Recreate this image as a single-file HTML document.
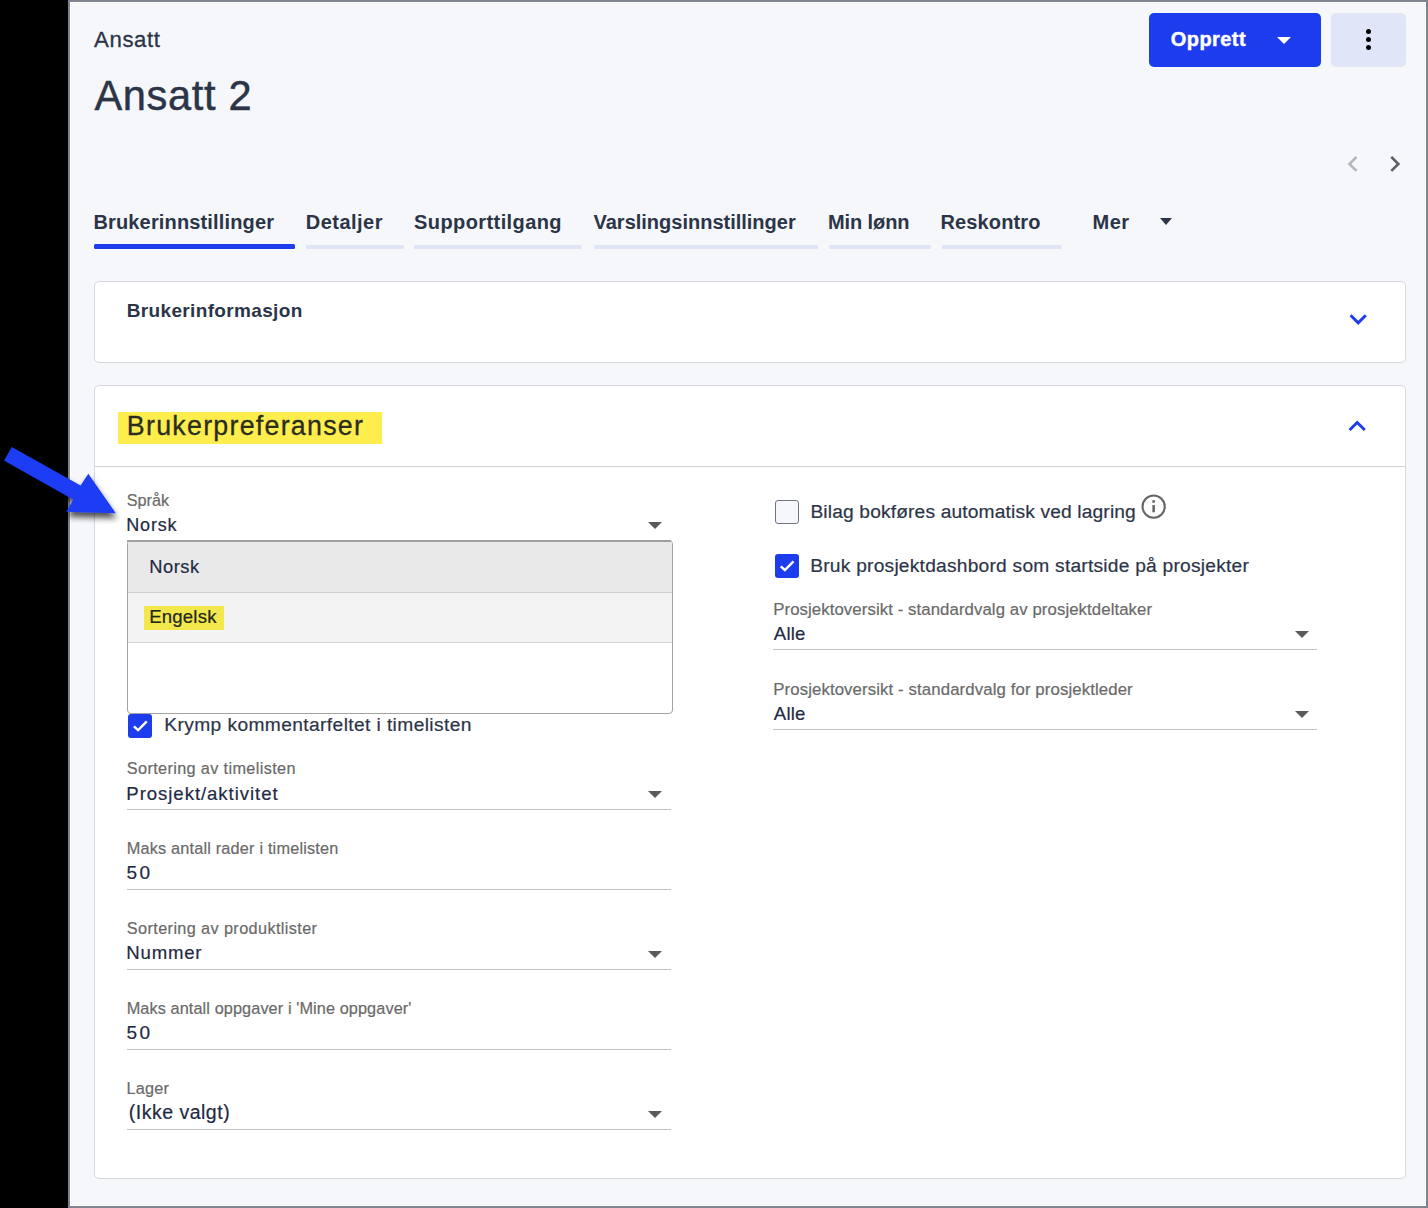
<!DOCTYPE html>
<html><head><meta charset="utf-8">
<style>
html,body{margin:0;padding:0;}
body{width:1428px;height:1208px;background:#000;position:relative;overflow:hidden;font-family:"Liberation Sans",sans-serif;}
.abs{position:absolute;}
.t{position:absolute;white-space:nowrap;line-height:1.117;-webkit-text-stroke:0.2px currentColor;}
#frame{position:absolute;left:68px;top:0;width:1356px;height:1204px;border:2px solid #7f8491;background:#f5f7fb;box-shadow:inset 0 0 0 1px #fff;}
.btn-blue{position:absolute;left:1149px;top:13px;width:172px;height:54px;border-radius:5px;background:#1d3cee;}
.btn-kebab{position:absolute;left:1331px;top:13px;width:75px;height:54px;border-radius:5px;background:#e1e5f8;}
.dot{position:absolute;width:5.2px;height:5.2px;border-radius:50%;background:#000;}
.uline{position:absolute;height:4px;border-radius:1.5px;background:#e0e4f7;top:245px;}
.card{position:absolute;left:94px;width:1310px;background:#fff;border:1px solid #d6d8dd;border-radius:5px;}
.ul{position:absolute;height:1px;background:#c2c2c2;}
.tri{position:absolute;width:0;height:0;border-left:7px solid transparent;border-right:7px solid transparent;border-top:7.4px solid #5a5a5a;}
.cb{position:absolute;width:24px;height:24px;border-radius:3px;background:#1d3cee;box-sizing:border-box;}
.cbu{position:absolute;width:24px;height:24px;border-radius:3px;background:#f5f7fb;border:1px solid #6f7480;box-sizing:border-box;}
</style></head><body>
<div id="frame"></div>

<!-- header buttons -->
<div class="btn-blue"></div>
<div class="tri" style="left:1276.5px;top:37px;border-left-width:7px;border-right-width:7px;border-top-width:7.4px;border-top-color:#fff;"></div>
<div class="btn-kebab"></div>
<div class="dot" style="left:1366.0px;top:29.3px;"></div>
<div class="dot" style="left:1366.0px;top:37.3px;"></div>
<div class="dot" style="left:1366.0px;top:45.3px;"></div>

<!-- pagination chevrons -->
<svg class="abs" style="left:1336.9px;top:147.8px;" width="31.8" height="31.8" viewBox="0 0 24 24"><path d="M15.41 7.41L14 6l-6 6 6 6 1.41-1.41L10.83 12z" fill="#b4b6bb"/></svg>
<svg class="abs" style="left:1379.3px;top:147.8px;" width="31.8" height="31.8" viewBox="0 0 24 24"><path d="M10 6L8.59 7.41 13.17 12l-4.58 4.59L10 18l6-6z" fill="#5e5f65"/></svg>

<!-- tab underlines -->
<div class="uline" style="left:94px;width:201px;top:244px;height:5px;background:#1d3cee;"></div>
<div class="uline" style="left:306px;width:98px;"></div>
<div class="uline" style="left:414px;width:168px;"></div>
<div class="uline" style="left:594px;width:224px;"></div>
<div class="uline" style="left:829px;width:102px;"></div>
<div class="uline" style="left:942px;width:120px;"></div>
<div class="tri" style="left:1160.3px;top:218px;border-left-width:6.5px;border-right-width:6.5px;border-top-width:7px;border-top-color:#2c3447;"></div>

<!-- card 1 -->
<div class="card" style="top:281px;height:80px;"></div>
<svg class="abs" style="left:1340.6px;top:302.2px;" width="34.4" height="34.4" viewBox="0 0 24 24"><path d="M16.59 8.59L12 13.17 7.41 8.59 6 10l6 6 6-6z" fill="#1d3cee"/></svg>

<!-- card 2 -->
<div class="card" style="top:385px;height:792px;"></div>
<div class="abs" style="left:95px;top:466px;width:1310px;height:1px;background:#d3d3d5;"></div>
<svg class="abs" style="left:1339.6px;top:408.9px;" width="34.4" height="34.4" viewBox="0 0 24 24"><path d="M12 8l-6 6 1.41 1.41L12 10.83l4.59 4.58L18 14z" fill="#1d3cee"/></svg>
<div class="abs" style="left:118px;top:412px;width:264px;height:32px;background:#fdee4e;"></div>

<!-- left column underlines / triangles -->
<div class="ul" style="left:127px;top:540px;width:544px;height:2px;background:#9b9b9b;"></div>
<div class="tri" style="left:648.3px;top:522px;"></div>
<div class="ul" style="left:127px;top:809px;width:544px;"></div>
<div class="tri" style="left:648.3px;top:791px;"></div>
<div class="ul" style="left:127px;top:889px;width:544px;"></div>
<div class="ul" style="left:127px;top:969px;width:544px;"></div>
<div class="tri" style="left:648.3px;top:950.5px;"></div>
<div class="ul" style="left:127px;top:1049px;width:544px;"></div>
<div class="ul" style="left:127px;top:1129px;width:544px;"></div>
<div class="tri" style="left:648.3px;top:1110.5px;"></div>

<!-- right column -->
<div class="ul" style="left:773px;top:649px;width:544px;"></div>
<div class="tri" style="left:1294.7px;top:631px;"></div>
<div class="ul" style="left:773px;top:729px;width:544px;"></div>
<div class="tri" style="left:1294.7px;top:711px;"></div>

<!-- dropdown -->
<div class="abs" style="left:127px;top:540px;width:546px;height:174px;box-sizing:border-box;border:1px solid #a3a3a3;border-radius:4px;background:#fff;overflow:hidden;">
  <div class="abs" style="left:0;top:1px;width:544px;height:50px;background:#e9e9e9;border-bottom:1px solid #cfcfcf;"></div>
  <div class="abs" style="left:0;top:52px;width:544px;height:49px;background:#f3f3f3;border-bottom:1px solid #d4d4d4;"></div>
</div>
<div class="abs" style="left:127px;top:540px;width:544px;height:2px;background:#a0a0a0;"></div>
<div class="abs" style="left:144px;top:606px;width:80px;height:24px;background:#f2e84b;"></div>

<!-- checkboxes -->
<div class="cb" style="left:128px;top:714px;"></div>
<svg class="abs" style="left:128px;top:714px;" width="24" height="24" viewBox="0 0 24 24"><path d="M5.9 12.3 L10.1 16.1 L18.8 7.4" fill="none" stroke="#fff" stroke-width="2.4"/></svg>
<div class="cbu" style="left:775px;top:500px;"></div>
<div class="cb" style="left:775px;top:554px;"></div>
<svg class="abs" style="left:775px;top:554px;" width="24" height="24" viewBox="0 0 24 24"><path d="M5.8 12.3 L9.9 16.0 L18.5 7.4" fill="none" stroke="#fff" stroke-width="2.4"/></svg>

<!-- info icon -->
<svg class="abs" style="left:1139px;top:492.3px;" width="29.3" height="29.3" viewBox="0 0 24 24"><circle cx="12" cy="12" r="9.1" fill="none" stroke="#656565" stroke-width="1.75"/><rect x="10.95" y="10.7" width="2.1" height="5.9" fill="#656565"/><rect x="10.95" y="6.7" width="2.1" height="2.1" fill="#656565"/></svg>

<div id="hdr_small" class="t" style="left:94.04px;top:28.00px;font-size:22.2px;letter-spacing:0.607px;color:#2c3447;-webkit-text-stroke:0.3px currentColor;">Ansatt</div>
<div id="hdr_big" class="t" style="left:94.43px;top:73.06px;font-size:41.6px;letter-spacing:0.654px;color:#2c3447;-webkit-text-stroke:0.45px currentColor;">Ansatt 2</div>
<div id="opprett" class="t" style="left:1170.82px;top:27.52px;font-size:20px;letter-spacing:0.431px;color:#ffffff;font-weight:700;-webkit-text-stroke:0.45px currentColor;">Opprett</div>
<div id="tab1" class="t" style="left:93.43px;top:210.52px;font-size:20px;letter-spacing:0.154px;color:#2c3447;font-weight:700;-webkit-text-stroke:0;">Brukerinnstillinger</div>
<div id="tab2" class="t" style="left:305.71px;top:210.52px;font-size:20px;letter-spacing:0.491px;color:#2c3447;font-weight:700;-webkit-text-stroke:0;">Detaljer</div>
<div id="tab3" class="t" style="left:414.10px;top:210.52px;font-size:20px;letter-spacing:0.404px;color:#2c3447;font-weight:700;-webkit-text-stroke:0;">Supporttilgang</div>
<div id="tab4" class="t" style="left:593.52px;top:210.52px;font-size:20px;letter-spacing:-0.005px;color:#2c3447;font-weight:700;-webkit-text-stroke:0;">Varslingsinnstillinger</div>
<div id="tab5" class="t" style="left:827.90px;top:210.52px;font-size:20px;letter-spacing:-0.074px;color:#2c3447;font-weight:700;-webkit-text-stroke:0;">Min lønn</div>
<div id="tab6" class="t" style="left:940.43px;top:210.52px;font-size:20px;letter-spacing:0.139px;color:#2c3447;font-weight:700;-webkit-text-stroke:0;">Reskontro</div>
<div id="tab7" class="t" style="left:1092.57px;top:210.52px;font-size:20px;letter-spacing:0.467px;color:#2c3447;font-weight:700;-webkit-text-stroke:0;">Mer</div>
<div id="binfo" class="t" style="left:126.80px;top:299.61px;font-size:19px;letter-spacing:0.342px;color:#2c3447;font-weight:700;-webkit-text-stroke:0;">Brukerinformasjon</div>
<div id="bpref" class="t" style="left:126.86px;top:412.22px;font-size:26.8px;letter-spacing:1.254px;color:#2a2d1e;-webkit-text-stroke:0.3px currentColor;">Brukerpreferanser</div>
<div id="sprak" class="t" style="left:126.67px;top:490.96px;font-size:16.2px;letter-spacing:0.063px;color:#6a6a6a;">Språk</div>
<div id="norsk" class="t" style="left:126.29px;top:514.85px;font-size:18px;letter-spacing:0.829px;color:#1f2a44;">Norsk</div>
<div id="dd_norsk" class="t" style="left:149.19px;top:557.15px;font-size:18.3px;letter-spacing:0.560px;color:#1f2a44;">Norsk</div>
<div id="engelsk" class="t" style="left:149.20px;top:607.26px;font-size:18.6px;letter-spacing:0.184px;color:#23261a;">Engelsk</div>
<div id="krymp" class="t" style="left:164.30px;top:714.43px;font-size:19.2px;letter-spacing:0.389px;color:#2c3447;">Krymp kommentarfeltet i timelisten</div>
<div id="sort1" class="t" style="left:126.84px;top:759.49px;font-size:16.3px;letter-spacing:0.343px;color:#6a6a6a;">Sortering av timelisten</div>
<div id="prosj" class="t" style="left:126.35px;top:783.69px;font-size:18.6px;letter-spacing:0.933px;color:#1f2a44;">Prosjekt/aktivitet</div>
<div id="maks1" class="t" style="left:126.68px;top:839.06px;font-size:16.3px;letter-spacing:0.185px;color:#6a6a6a;">Maks antall rader i timelisten</div>
<div id="fifty1" class="t" style="left:126.58px;top:862.24px;font-size:19px;letter-spacing:2.311px;color:#1f2a44;">50</div>
<div id="sort2" class="t" style="left:126.84px;top:918.87px;font-size:16.3px;letter-spacing:0.369px;color:#6a6a6a;">Sortering av produktlister</div>
<div id="nummer" class="t" style="left:126.35px;top:942.88px;font-size:18.6px;letter-spacing:0.780px;color:#1f2a44;">Nummer</div>
<div id="maks2" class="t" style="left:126.68px;top:999.06px;font-size:16.3px;letter-spacing:0.092px;color:#6a6a6a;">Maks antall oppgaver i 'Mine oppgaver'</div>
<div id="fifty2" class="t" style="left:126.58px;top:1022.24px;font-size:19px;letter-spacing:2.311px;color:#1f2a44;">50</div>
<div id="lager" class="t" style="left:126.57px;top:1079.06px;font-size:16.3px;letter-spacing:0.157px;color:#6a6a6a;">Lager</div>
<div id="ikke" class="t" style="left:128.73px;top:1102.25px;font-size:19.5px;letter-spacing:0.504px;color:#1f2a44;">(Ikke valgt)</div>
<div id="bilag" class="t" style="left:810.42px;top:500.81px;font-size:19.2px;letter-spacing:0.151px;color:#2c3447;">Bilag bokføres automatisk ved lagring</div>
<div id="bruk" class="t" style="left:810.21px;top:554.62px;font-size:19.2px;letter-spacing:0.230px;color:#2c3447;">Bruk prosjektdashbord som startside på prosjekter</div>
<div id="po1" class="t" style="left:773.23px;top:601.27px;font-size:16.8px;letter-spacing:0.078px;color:#6a6a6a;">Prosjektoversikt - standardvalg av prosjektdeltaker</div>
<div id="alle1" class="t" style="left:773.83px;top:623.69px;font-size:18.6px;letter-spacing:0.161px;color:#1f2a44;">Alle</div>
<div id="po2" class="t" style="left:773.23px;top:681.27px;font-size:16.8px;letter-spacing:0.105px;color:#6a6a6a;">Prosjektoversikt - standardvalg for prosjektleder</div>
<div id="alle2" class="t" style="left:773.83px;top:703.69px;font-size:18.6px;letter-spacing:0.161px;color:#1f2a44;">Alle</div>

<!-- arrow -->
<svg class="abs" style="left:0;top:430px;overflow:visible;" width="140" height="100" viewBox="0 430 140 100">
  <defs><filter id="sh" x="-30%" y="-30%" width="160%" height="170%"><feGaussianBlur in="SourceAlpha" stdDeviation="3"/><feOffset dx="1" dy="5"/><feComponentTransfer><feFuncA type="linear" slope="0.7"/></feComponentTransfer><feMerge><feMergeNode/><feMergeNode in="SourceGraphic"/></feMerge></filter></defs>
  <path d="M11.8 447.1 L4.1 460.5 L73.3 499.6 L66.3 511.7 L115.8 513.3 L88.3 473.7 L80.6 485.5 Z" fill="#1b3cf3" filter="url(#sh)"/>
</svg>
</body></html>
